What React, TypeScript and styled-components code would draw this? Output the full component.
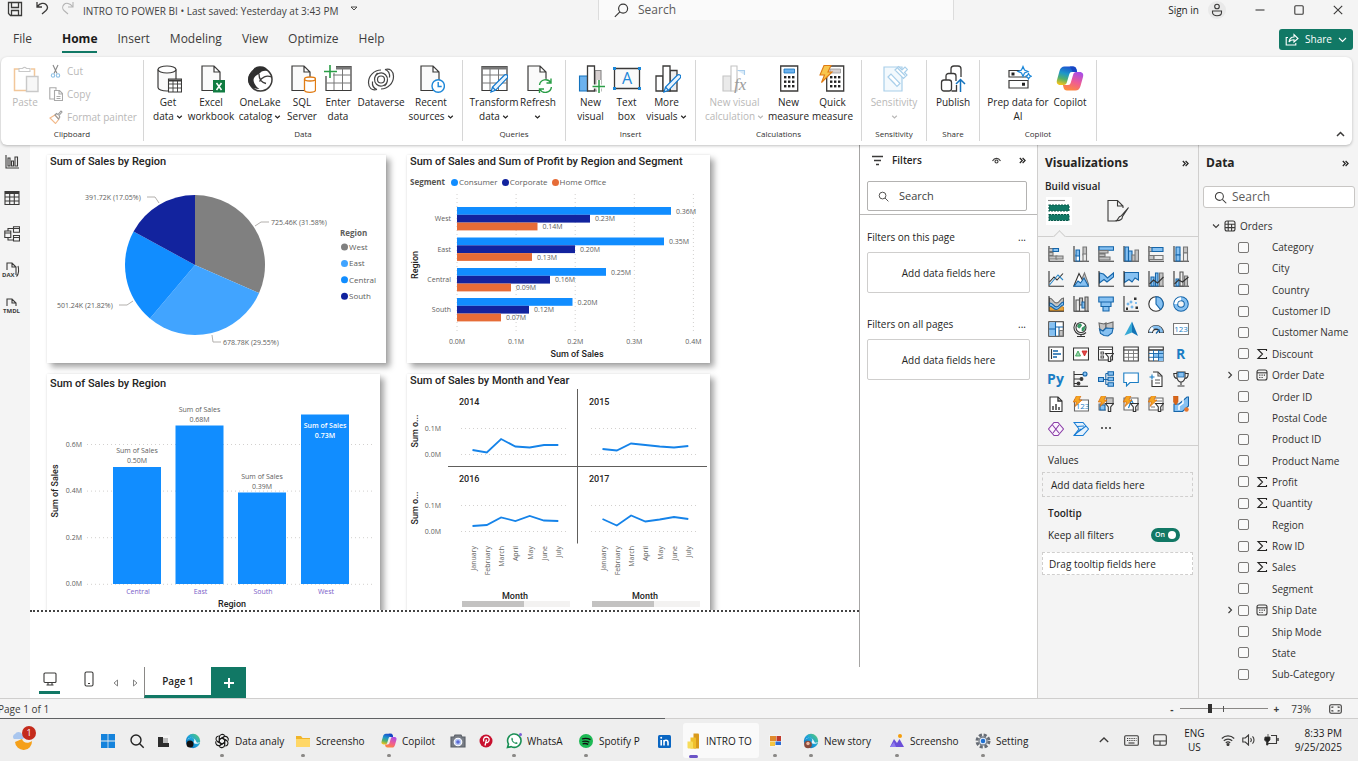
import React from "react";
import styled, { createGlobalStyle, css } from "styled-components";

const sans = `"Open Sans", "Noto Sans", sans-serif`;
const din = `Roboto, "Open Sans", sans-serif`;
const green = "#117865";

const GlobalStyle = createGlobalStyle`
  *, *::before, *::after { box-sizing: border-box; }
  body { margin: 0; background: #f4f4f4; font-family: ${sans}; font-size: 10px; line-height: 14px; color: #252423; }
  button, input { font: inherit; color: inherit; }
  h1, h2, h3, p, ul { margin: 0; padding: 0; font-size: inherit; font-weight: inherit; list-style: none; }
  svg { display: block; flex: none; }
`;

/* ---------- small shared pieces ---------- */

const PlainButton = styled.button`
  display: flex;
  align-items: center;
  justify-content: center;
  padding: 0;
  border: 0;
  background: none;
`;

const Shell = styled.div`
  display: flex;
  flex-direction: column;
  min-height: 100vh;
`;

type IconProps = { size?: number; w?: number; h?: number; box?: string; children: React.ReactNode };
const Icon = ({ size = 16, w, h, box, children }: IconProps) => (
  <svg
    width={w ?? size}
    height={h ?? size}
    viewBox={box ?? `0 0 ${w ?? size} ${h ?? size}`}
    fill="none"
    stroke="#3b3a39"
    strokeWidth="1.1"
    aria-hidden="true"
  >
    {children}
  </svg>
);

const ChevronDown = () => (
  <Icon size={7}><path d="M1.2 2.8 3.5 5l2.300-2.200" stroke="currentColor" strokeWidth="1.2" /></Icon>
);
const DoubleChevron = () => (
  <Icon size={7}><path d="M.8 1l2.500 2.500L.8 6M3.600 1l2.500 2.500L3.600 6" stroke="#252423" strokeWidth="1.2" /></Icon>
);
const Magnifier = ({ size = 14, flip = false }: { size?: number; flip?: boolean }) => (
  <Icon size={size} box="0 0 14 14">
    {flip ? (
      <g><circle cx="8.5" cy="5.2" r="4.2" /><path d="M5.5 8.300.8 13" /></g>
    ) : (
      <g><circle cx="5.8" cy="5.8" r="4.3" /><path d="m9 9 4.200 4.200" /></g>
    )}
  </Icon>
);

/* ---------- title bar ---------- */

const TitleBar = styled.header`
  display: grid;
  grid-template-columns: 598fr 356fr 404fr;
  height: 23px;
`;
const TitleLeft = styled.div`
  display: flex;
  align-items: flex-start;
  gap: 12px;
  padding: 1px 0 0 7px;
`;
const DocName = styled.h1`
  margin: 3px 0 0 -4px;
  color: #424242;
  white-space: nowrap;
`;
const TitleSearch = styled.label`
  display: flex;
  align-items: center;
  gap: 9px;
  height: 20px;
  padding-left: 15px;
  border: solid #dcdcdc;
  border-width: 0 1px;
  background: #fafafa;
`;
const SearchInput = styled.input<{ $size: number; $dark?: boolean }>`
  flex: 1;
  min-width: 0;
  padding: 0;
  border: 0;
  outline: 0;
  background: none;
  font-size: ${(p) => p.$size}px;
  line-height: 16px;
  &::placeholder { color: ${(p) => (p.$dark ? "#403f3e" : "#5c5b5a")}; opacity: 1; }
`;
const TitleRight = styled.div`
  display: flex;
  align-items: center;
  justify-content: flex-end;
  height: 20px;
  padding-right: 13px;
`;
const WindowButton = styled(PlainButton)`
  width: 14px;
  margin-left: 25px;
`;
const Avatar = styled.span`
  display: grid;
  place-items: center;
  width: 18px;
  height: 18px;
  margin: 0 2px 0 9px;
  border-radius: 9px;
  background: #e9e9e9;
`;

/* ---------- menu ---------- */

const MenuBar = styled.nav`
  display: flex;
  align-items: center;
  gap: 20px;
  height: 34px;
  padding: 0 5px 0 13px;
  font-size: 12px;
  line-height: 18px;
  color: #3d3c3b;
`;
const MenuItem = styled.button<{ $active?: boolean; $lead?: boolean }>`
  padding: 2px 0 3px;
  border: 0;
  border-bottom: 2px solid ${(p) => (p.$active ? green : "transparent")};
  background: none;
  font-weight: ${(p) => (p.$active ? 700 : 400)};
  color: ${(p) => (p.$active ? "#1b1a19" : "inherit")};
  margin-right: ${(p) => (p.$lead ? 10 : 0)}px;
`;
const ShareButton = styled(PlainButton)`
  gap: 6px;
  width: 74px;
  height: 21px;
  margin: 0 0 2px auto;
  border-radius: 3px;
  background: ${green};
  color: #fff;
  font-size: 10px;
`;

/* ---------- ribbon ---------- */

const Ribbon = styled.section`
  position: relative;
  z-index: 1;
  display: flex;
  height: 88px;
  margin: 0 6px 0 1px;
  padding: 3px 0 4px;
  border-radius: 6px;
  background: #fff;
  box-shadow: 0 1px 3px rgba(0, 0, 0, 0.25);
`;
const Group = styled.div<{ $width: number }>`
  display: flex;
  flex-direction: column;
  justify-content: space-between;
  align-items: center;
  width: ${(p) => p.$width}px;
  border-right: 1px solid #d6d6d6;
`;
const GroupButtons = styled.div<{ $start?: boolean }>`
  display: flex;
  align-self: stretch;
  justify-content: ${(p) => (p.$start ? "flex-start" : "center")};
`;
const GroupName = styled.div`
  font-size: 8px;
  line-height: 14px;
  color: #323130;
`;
const RibbonButton = styled.button<{ $width: number; $muted?: boolean }>`
  display: flex;
  flex-direction: column;
  align-items: center;
  gap: 2px;
  width: ${(p) => p.$width}px;
  padding: 5px 0 0;
  border: 0;
  background: none;
  color: ${(p) => (p.$muted ? "#b9b8b7" : "#252423")};
  white-space: nowrap;
`;
const Line = styled.span`
  display: flex;
  align-items: center;
  justify-content: center;
  gap: 2px;
  min-height: 14px;
`;
const ClipList = styled.div`
  display: flex;
  flex-direction: column;
  gap: 9px;
  padding-top: 4px;
`;
const ClipButton = styled(PlainButton)`
  justify-content: flex-start;
  gap: 4px;
  height: 14px;
  color: #b9b8b7;
`;
const Collapse = styled(PlainButton)`
  align-self: flex-end;
  width: 14px;
  height: 14px;
  margin: 0 5px 0 auto;
`;

const Doc = ({ x = 4 }: { x?: number }) => (
  <path d={`M${x} 1h12l6 6v18.500h-18zM${x + 12} 1v6h6`} fill="#fafafa" strokeWidth="1.2" />
);
const TableShape = () => (
  <g strokeWidth="1">
    <path d="M2 1.500h25v24H2z" fill="#fff" strokeWidth="1.2" />
    <path d="M2 3h25" strokeWidth="3" stroke="#777" />
    <path d="M2 10h25M2 18h25M10 4v21M18.500 4v21" stroke="#777" />
  </g>
);
const Pencil = () => (
  <path d="M11 27l1.500-5L24.500 10a2 2 0 0 1 2.800 2.800L15.500 25.300zM12.500 22l3 3.300" fill="#e9f4fd" stroke="#0f78cf" strokeWidth="1.2" />
);
const Calculator = ({ x, plain }: { x: number; plain?: boolean }) => (
  <g transform={`translate(${x} 0)`}>
    <path d="M.7 1h17v25H.7z" fill="#fff" strokeWidth="1.3" />
    <path d="M4 4h10.500v4H4z" fill={plain ? "#d6cfcf" : "#6cb2ee"} stroke={plain ? "#999" : "#1372bd"} strokeWidth=".8" />
    {[11, 15.5, 20].map((y) =>
      [4, 8, 12].map((cx) => <path key={`${cx}-${y}`} d={`M${cx} ${y}h2.400v2.400h-2.400z`} fill="#222" stroke="none" />),
    )}
  </g>
);
const CopilotMark = ({ id }: { id: string }) => (
  <g stroke="none">
    <defs>
      <linearGradient id={`${id}a`} x1=".6" y1="0" x2=".3" y2="1">
        <stop offset="0" stopColor="#1b4fd0" /><stop offset=".4" stopColor="#1e97c9" />
        <stop offset=".7" stopColor="#55b06a" /><stop offset="1" stopColor="#f0c21a" />
      </linearGradient>
      <linearGradient id={`${id}b`} x1=".7" y1="0" x2=".3" y2="1">
        <stop offset="0" stopColor="#a94ee6" /><stop offset=".5" stopColor="#ee5c95" /><stop offset="1" stopColor="#ff8a3a" />
      </linearGradient>
    </defs>
    <path d="M20 7h3.500c3.500 0 4.200 2.500 3.500 5l-2.500 9c-.8 3-2.500 4.500-5 4.500H11c-2 0-3-1.200-3.500-3l-.6-2.500H12c1.500 0 2.300-.8 2.800-2.500l2.400-8C17.700 8 18.500 7 20 7z" fill={`url(#${id}b)`} />
    <path d="M8 20H4.500C1 20 .3 17.500 1 15l2.500-9C4.300 3 6 1.500 8.500 1.500H17c2 0 3 1.200 3.500 3l.6 2.500H16c-1.500 0-2.300.8-2.800 2.500l-2.400 8C10.300 19 9.500 20 8 20z" fill={`url(#${id}a)`} />
    <path d="M13.500 1.500H17c2 0 3 1.200 3.500 3l.6 2.500H17c-1.500-1-1.800-5.500-3.500-5.500z" fill="#1646c4" />
  </g>
);

const ribbonArt: Record<string, React.ReactNode> = {
  paste: (
    <g stroke="#c9c9c9">
      <path d="M8 4H3.500v21.500H15M20 4h3.500v7" stroke="#f2c79a" strokeWidth="1.5" />
      <path d="M8 6.500V3.500h3.500a2.300 2.300 0 0 1 4 0H19v3z" fill="#fff" />
      <path d="M15.500 11.500H27v15H15.500z" fill="#f7f7f7" strokeWidth="1.4" />
    </g>
  ),
  getData: (
    <g>
      <path d="M4 4.500v18c0 2 4 3.500 9 3.500s9-1.500 9-3.500v-18" fill="#fafafa" strokeWidth="1.2" />
      <ellipse cx="13" cy="4.5" rx="9" ry="3.5" fill="#fff" strokeWidth="1.2" />
      <path d="M14.500 14h13v13h-13z" fill="#fff" />
      <path d="M14.500 15.500h13" strokeWidth="2" /><path d="M14.500 19h13M14.500 23h13M19 16v11M23.500 16v11" strokeWidth=".9" />
    </g>
  ),
  excel: (
    <g>
      <Doc x={5} />
      <path d="M16 15h12v12.500H16z" fill="#107c41" stroke="none" />
      <path d="m19.500 18 5 7M24.500 18l-5 7" stroke="#fff" strokeWidth="1.5" />
    </g>
  ),
  onelake: (
    <g>
      <circle cx="14.500" cy="14.500" r="11.500" fill="#fff" strokeWidth="1.5" />
      <path d="M12 1.500c5-1 9 1 10 4.500-4-1-7 0-9 3-3 1-5 3-5.500 6 .5 4 3 7 6 9C6 24 2 20 2 14.500 2 11 4 8 6.500 7 7 4 9 2 12 1.500z" fill="#2f2f2f" stroke="none" />
      <path d="M13 9c0 5 3 8.500 7 9.500M25.500 12c-5-2-10 0-12 4.500" strokeWidth="1.3" />
    </g>
  ),
  sql: (
    <g>
      <Doc />
      <g stroke="#e07b13" strokeWidth="1.3">
        <path d="M16.500 14v11c0 1.300 2.500 2.300 5.500 2.300s5.500-1 5.500-2.300V14" fill="#fff" />
        <ellipse cx="22" cy="14" rx="5.5" ry="2" fill="#fff" />
      </g>
    </g>
  ),
  enter: (
    <g>
      <TableShape />
      <path d="M0 0h12v8H9v3H0z" fill="#fff" stroke="none" />
      <path d="M6 0v13M0 6.500h13" stroke="#2a9d46" strokeWidth="1.6" />
    </g>
  ),
  dataverse: (
    <g strokeWidth="1.2" stroke="#444">
      <circle cx="14" cy="14.500" r="3.500" />
      <path d="M7.500 14.500a6.500 6.500 0 0 1 11-4.700c3 3 2.500 8-1 11.200M20.500 14.500a6.500 6.500 0 0 1-11 4.700c-3-3-2.500-8 1-11.200" />
      <path d="M18 4.500c5-1.500 8.500 1.500 8.500 7C26.500 18 21 24 14 24M10 24.500c-5 1.500-8.500-1.500-8.500-7C1.500 11 7 5 14 5" />
      <path d="M18 4.500c3 1 5 4 4.500 8M10 24.500c-3-1-5-4-4.500-8" />
    </g>
  ),
  recent: (
    <g>
      <Doc />
      <circle cx="21.200" cy="21" r="6.200" fill="#fff" stroke="#1c87d8" strokeWidth="1.4" />
      <path d="M21.200 17v4.500h3.500" stroke="#1c87d8" strokeWidth="1.4" />
    </g>
  ),
  transform: <g><TableShape /><Pencil /></g>,
  refresh: (
    <g>
      <Doc />
      <circle cx="21.500" cy="21" r="7.200" fill="#fff" stroke="none" />
      <path d="M15.500 20a6.200 6.200 0 0 1 11.300-2.500M27.400 22A6.200 6.200 0 0 1 16 24.500M27 13.500v4.500h-4.500M15.500 28V24H20" stroke="#2a9d46" strokeWidth="1.4" />
    </g>
  ),
  newVisual: (
    <g>
      <path d="M2.500 11h8v15h-8z" fill="#6cb2ee" stroke="#1372bd" />
      <path d="M18 5.500h6V26h-6z" fill="#d6cfcf" stroke="#888" />
      <path d="M10.500 1h7v25h-7z" fill="#fff" strokeWidth="1.3" />
      <path d="M22 15v13M15.500 21.500h13" stroke="#fff" strokeWidth="4" />
      <path d="M22 15v13M15.500 21.500h12.500" stroke="#2a9d46" strokeWidth="1.5" />
    </g>
  ),
  textBox: (
    <g>
      <path d="M1.500 3.500h25v20h-25z" fill="#fafafa" strokeWidth="1.3" />
      {[[1.5, 3.5], [26.5, 3.5], [1.5, 23.5], [26.5, 23.5]].map(([x, y]) => (
        <path key={`${x}${y}`} d={`M${x - 1.5} ${y - 1.5}h3v3h-3z`} fill="#1c87d8" stroke="none" />
      ))}
      <text x="14" y="19" fontSize="16" textAnchor="middle" fill="#1c87d8" stroke="none">A</text>
    </g>
  ),
  moreVisuals: (
    <g strokeWidth="1.3">
      <path d="M3 11h7v15H3z" fill="#fff" /><path d="M17 5.500h7V26h-7z" fill="#eee" /><path d="M10 1h7v25h-7z" fill="#fff" />
      <Pencil />
    </g>
  ),
  visualCalc: (
    <g stroke="#c4c4c4">
      <path d="M2 11h8v15H2z" fill="#eaeaea" /><path d="M10 1h6v25h-6z" fill="#fff" />
      <path d="M16.500 5.500h7V10" stroke="#a9cdec" fill="#d9eaf8" />
      <text x="13" y="25" fontSize="17" fontStyle="italic" fontFamily="Liberation Serif, serif" fill="#9b9b9b" stroke="none">fx</text>
    </g>
  ),
  newMeasure: <Calculator x={5} />,
  quickMeasure: (
    <g>
      <Calculator x={7} plain />
      <path d="M5 .5h7L9 7h4L2.500 17.500 5.500 10H1z" fill="#f8c64e" stroke="#e07b13" />
    </g>
  ),
  sensitivity: (
    <g stroke="#a9cfea" strokeWidth="1.2">
      <path d="M4 2h18v24H4z" fill="#f3f9fd" />
      <path d="m8 12 3-3 9 9.500-3 3zM10.500 14.500l4.500 4.500" fill="#fff" />
      <path d="m15 5 3.500-3.500L22 5l3-3 2.500 2.500-3 3 2.500 2.500-3.500 3.500z" fill="#fff" />
      <path d="m17.500 3 7.500 7.500" />
    </g>
  ),
  publish: (
    <g strokeWidth="1.3">
      <path d="M12 8.500V4a3 3 0 0 1 3-3h4a3 3 0 0 1 3 3v8M7 15v-4a2.500 2.500 0 0 1 2.500-2.500h5A2.500 2.500 0 0 1 17 11v5" />
      <rect x="2.500" y="15" width="10" height="11" rx="2.5" /><path d="M12.500 26h5v-6" />
      <path d="M21.500 27V14.500M17 19l4.500-4.500L26 19" stroke="#1372bd" strokeWidth="1.5" />
    </g>
  ),
  prep: (
    <g strokeWidth="1.2">
      <path d="M17 5.500H5V12h18v-1M5 15.500h19v7.500H5z" />
      <path d="M7.500 7.500h3v3h-3zM18 17.800h3v3h-3z" fill="#222" stroke="none" />
      <path d="M19 1.500 20.500 5 24 6.500 20.500 8 19 11.500 17.500 8 14 6.500 17.500 5z" fill="#fff" stroke="#1c87d8" />
      <path d="m24.500 8.500 1 1.700 1.800 1-1.800 1-1 1.800-1-1.800-1.800-1 1.800-1z" fill="#fff" stroke="#1c87d8" />
    </g>
  ),
  copilot: <CopilotMark id="ribbon" />,
};

type Cmd = { art: string; l1: string; l2?: string; w: number; menu?: boolean; muted?: boolean };
const ribbonGroups: { name: string; width: number; cmds: Cmd[] }[] = [
  {
    name: "Data", width: 319, cmds: [
      { art: "getData", l1: "Get", l2: "data", w: 40, menu: true },
      { art: "excel", l1: "Excel", l2: "workbook", w: 46 },
      { art: "onelake", l1: "OneLake", l2: "catalog", w: 52, menu: true },
      { art: "sql", l1: "SQL", l2: "Server", w: 32 },
      { art: "enter", l1: "Enter", l2: "data", w: 40 },
      { art: "dataverse", l1: "Dataverse", w: 46 },
      { art: "recent", l1: "Recent", l2: "sources", w: 54, menu: true },
    ],
  },
  { name: "Queries", width: 103, cmds: [
    { art: "transform", l1: "Transform", l2: "data", w: 48, menu: true },
    { art: "refresh", l1: "Refresh", l2: "", w: 40, menu: true },
  ] },
  { name: "Insert", width: 130, cmds: [
    { art: "newVisual", l1: "New", l2: "visual", w: 36 },
    { art: "textBox", l1: "Text", l2: "box", w: 36 },
    { art: "moreVisuals", l1: "More", l2: "visuals", w: 44, menu: true },
  ] },
  { name: "Calculations", width: 166, cmds: [
    { art: "visualCalc", l1: "New visual", l2: "calculation", w: 62, menu: true, muted: true },
    { art: "newMeasure", l1: "New", l2: "measure", w: 46 },
    { art: "quickMeasure", l1: "Quick", l2: "measure", w: 42 },
  ] },
  { name: "Sensitivity", width: 65, cmds: [{ art: "sensitivity", l1: "Sensitivity", l2: "", w: 52, menu: true, muted: true }] },
  { name: "Share", width: 53, cmds: [{ art: "publish", l1: "Publish", w: 44 }] },
  { name: "Copilot", width: 117, cmds: [
    { art: "prep", l1: "Prep data for", l2: "AI", w: 64 },
    { art: "copilot", l1: "Copilot", w: 40 },
  ] },
];

/* ---------- workspace ---------- */

const Workspace = styled.main`
  flex: 1;
  display: flex;
`;
const Rail = styled.nav`
  display: flex;
  flex-direction: column;
  align-items: center;
  gap: 20px;
  width: 30px;
  padding: 9px 6px 0 0;
  background: #f4f4f4;
`;
const RailButton = styled(PlainButton)`
  width: 20px;
  height: 16px;
`;
const Center = styled.div`
  flex: 1;
  display: flex;
  flex-direction: column;
  min-width: 0;
  background: #fff;
`;
const CenterTop = styled.div`
  flex: 1;
  display: flex;
`;
const Canvas = styled.section`
  flex: 1;
  min-width: 0;
`;
const ReportPage = styled.div`
  display: grid;
  grid-template-columns: 339px 303px;
  grid-template-rows: 208px 237px;
  gap: 11px 21px;
  height: 467px;
  padding: 10px 0 0 17px;
  border-bottom: 2px dotted #444;
  overflow: hidden;
`;
const Visual = styled.article<{ $narrow?: boolean }>`
  margin-right: ${(p) => (p.$narrow ? 6 : 0)}px;
  background: #fff;
  box-shadow: 4px 4px 6px rgba(0, 0, 0, 0.36), 0 0 2px rgba(0, 0, 0, 0.1);
`;
const VisualTitle = styled.h2<{ $low?: boolean }>`
  padding: ${(p) => (p.$low ? 3 : 0)}px 0 0 3px;
  height: ${(p) => (p.$low ? 17 : 14)}px;
  font: 500 11px/14px ${din};
  color: #252423;
  white-space: nowrap;
`;
const SegmentLegend = styled.ul`
  display: flex;
  align-items: center;
  gap: 4px;
  height: 14px;
  margin: 6px 0 0 3px;
  font-size: 8px;
  line-height: 14px;
  color: #605e5c;
`;
const LegendTitle = styled.li`
  margin-right: 2px;
  font-weight: 700;
  color: #55534f;
`;
const LegendItem = styled.li<{ $color: string }>`
  display: flex;
  align-items: center;
  gap: 1px;
  &::before { content: ""; width: 7px; height: 7px; border-radius: 4px; background: ${(p) => p.$color}; }
`;
const Chart = styled.svg`
  width: 100%;
  height: auto;
  font-family: ${sans};
  font-size: 7px;
  fill: #605e5c;
  .din { font-family: ${din}; font-size: 9px; font-weight: 500; fill: #252423; }
  .legend { font-size: 8px; }
`;

const slices = [
  { name: "West", share: 31.58, color: "#808080" },
  { name: "East", share: 29.55, color: "#41a4ff" },
  { name: "Central", share: 21.82, color: "#118dff" },
  { name: "South", share: 17.05, color: "#12239e" },
];
const PieChart = () => {
  let sum = 0;
  const at = (v: number) => {
    const a = (v / 100) * Math.PI * 2;
    return `${195 + 70 * Math.sin(a)} ${265 - 70 * Math.cos(a)}`;
  };
  return (
    <Chart viewBox="47 169 339 194" role="img" aria-label="Sum of Sales by Region">
      {slices.map((s) => {
        const from = at(sum);
        sum += s.share;
        return <path key={s.name} d={`M195 265L${from}A70 70 0 0 1 ${at(sum)}z`} fill={s.color} />;
      })}
      <g fill="none" stroke="#b3b0ad" strokeWidth="1">
        <path d="M147 197h8l4 6M255 226l6-4h8M212 335l1 7h8M119 305h8l6-4" />
      </g>
      <text x="85" y="200">391.72K (17.05%)</text>
      <text x="271" y="225">725.46K (31.58%)</text>
      <text x="57" y="308">501.24K (21.82%)</text>
      <text x="223" y="345">678.78K (29.55%)</text>
      <g className="legend">
        <text x="340" y="236" fontWeight="700">Region</text>
        {slices.map((s, i) => (
          <g key={s.name}>
            <circle cx="344.500" cy={247 + i * 16.4} r="3.5" fill={s.color} />
            <text x="349" y={250 + i * 16.4}>{s.name}</text>
          </g>
        ))}
      </g>
    </Chart>
  );
};

const clustered = [
  { name: "West", y: 207, bars: [[671, "0.36M"], [590, "0.23M"], [537.5, "0.14M"]] },
  { name: "East", y: 237.5, bars: [[664, "0.35M"], [575, "0.20M"], [532, "0.13M"]] },
  { name: "Central", y: 268, bars: [[606, "0.25M"], [550, "0.16M"], [511, "0.09M"]] },
  { name: "South", y: 298, bars: [[572.5, "0.20M"], [529, "0.12M"], [501, "0.07M"]] },
] as { name: string; y: number; bars: [number, string][] }[];
const segColors = ["#118dff", "#12239e", "#e66c37"];
const ClusteredChart = () => (
  <Chart viewBox="407 189 303 174" role="img" aria-label="Sum of Sales and Sum of Profit by Region and Segment">
    {["0.0M", "0.1M", "0.2M", "0.3M", "0.4M"].map((t, i) => (
      <g key={t}>
        <path d={`M${457 + i * 59.1} 194v140`} stroke="#d2d0ce" strokeDasharray="1 3" />
        <text x={457 + i * 59.1} y="344" textAnchor="middle">{t}</text>
      </g>
    ))}
    {clustered.map((r) => (
      <g key={r.name}>
        <text x="451" y={r.y + 14} textAnchor="end">{r.name}</text>
        {r.bars.map(([x, label], i) => (
          <g key={label}>
            <rect x="457" y={r.y + i * 7.8} width={x - 457} height={7.8} fill={segColors[i]} />
            <text x={x + 5} y={r.y + i * 7.8 + 6.5}>{label}</text>
          </g>
        ))}
      </g>
    ))}
    <text className="din" x="577" y="357" textAnchor="middle">Sum of Sales</text>
    <text className="din" transform="translate(418 265) rotate(-90)" textAnchor="middle">Region</text>
  </Chart>
);

const columns = [
  { name: "Central", x: 113, top: 467, value: "0.50M" },
  { name: "East", x: 175.5, top: 425.5, value: "0.68M" },
  { name: "South", x: 238, top: 492.5, value: "0.39M" },
  { name: "West", x: 301, top: 414.5, value: "0.73M" },
];
const ColumnChart = () => (
  <Chart viewBox="47 391 333 220" role="img" aria-label="Sum of Sales by Region">
    {["0.6M", "0.4M", "0.2M", "0.0M"].map((t, i) => (
      <g key={t}>
        <path d={`M87 ${444.5 + i * 46.6}h287`} stroke="#d2d0ce" strokeDasharray="1 3" />
        <text x="82" y={446.5 + i * 46.6} textAnchor="end">{t}</text>
      </g>
    ))}
    {columns.map((c) => {
      const inside = c.name === "West";
      const y = inside ? c.top + 13.5 : c.top - 14;
      return (
        <g key={c.name} textAnchor="middle">
          <rect x={c.x} y={c.top} width="48" height={584 - c.top} fill="#118dff" />
          <g fill={inside ? "#fff" : "#605e5c"} fontWeight={inside ? 600 : 400}>
            <text x={c.x + 24} y={y}>Sum of Sales</text>
            <text x={c.x + 24} y={y + 10}>{c.value}</text>
          </g>
          <text x={c.x + 25} y="594" fill="#7b61c9">{c.name}</text>
        </g>
      );
    })}
    <text className="din" x="232" y="607" textAnchor="middle">Region</text>
    <text className="din" transform="translate(58 491) rotate(-90)" textAnchor="middle">Sum of Sales</text>
  </Chart>
);

const months = ["January", "February", "March", "April", "May", "June", "July"];
const multiples = [
  { year: "2014", x: 459, y: 390, ys: [450, 452.5, 439, 446.5, 447.5, 445, 445] },
  { year: "2015", x: 589, y: 390, ys: [449, 450.5, 443.5, 445, 446.5, 447.5, 446] },
  { year: "2016", x: 459, y: 467, ys: [526, 525, 517.5, 521, 516, 520.5, 521] },
  { year: "2017", x: 589, y: 467, ys: [519, 525.5, 515.5, 521.5, 519.5, 517, 519] },
];
const SmallMultiples = () => (
  <Chart viewBox="407 388 303 223" role="img" aria-label="Sum of Sales by Month and Year">
    <path d="M448 466.500h259M577.500 389v154.500" stroke="#605e5c" />
    {multiples.map((m) => (
      <g key={m.year}>
        <text className="din" x={m.x} y={m.y + 15}>{m.year}</text>
        <path d={`M${m.x + 2} ${m.y + 38.5}h108M${m.x + 2} ${m.y + 64.5}h108`} stroke="#d2d0ce" strokeDasharray="1 3" />
        <path d={`M${m.ys.map((y, i) => `${m.x + 13.5 + i * 14.3} ${y}`).join("L")}`} fill="none" stroke="#1583e9" strokeWidth="1.8" />
      </g>
    ))}
    {[390, 467].map((y) => (
      <g key={y}>
        <text x="441" y={y + 41} textAnchor="end">0.1M</text>
        <text x="441" y={y + 67} textAnchor="end">0.0M</text>
        <text className="din" transform={`translate(418 ${y + 41}) rotate(-90)`} textAnchor="middle">Sum o...</text>
      </g>
    ))}
    {[459, 589].map((x) => (
      <g key={x}>
        {months.map((m, i) => (
          <text key={m} transform={`translate(${x + 16.5 + i * 14.3} 546) rotate(-90)`} textAnchor="end">{m}</text>
        ))}
        <text className="din" x={x + 56} y="599" textAnchor="middle">Month</text>
        <rect x={x + 3} y="601" width="108" height="6" fill="#f3f2f1" />
        <rect x={x + 3} y="601" width="62" height="6" fill="#c3c2c1" />
      </g>
    ))}
  </Chart>
);

/* ---------- page tabs ---------- */

const PageTabs = styled.div`
  display: flex;
  align-items: stretch;
  height: 31px;
  padding-left: 9px;
`;
const ViewButton = styled(PlainButton)<{ $active?: boolean }>`
  width: 21px;
  height: 27px;
  border-bottom: 3px solid ${(p) => (p.$active ? green : "transparent")};
  & + & { margin: 0 7px 0 18px; }
`;
const StepButton = styled(PlainButton)`
  width: 19px;
`;
const PageTab = styled.button`
  width: 67px;
  padding: 0;
  border: 0;
  border-left: 1px solid #8a8886;
  border-bottom: 3px solid ${green};
  background: #fff;
  font-weight: 600;
`;
const AddPage = styled(PlainButton)`
  width: 35px;
  background: ${green};
`;

/* ---------- filters pane ---------- */

const FiltersPane = styled.aside`
  width: 178px;
  border-left: 1px solid #a6a5a4;
`;
const FiltersHead = styled.div`
  display: flex;
  align-items: center;
  height: 30px;
  padding: 0 11px 0 12px;
  font-weight: 600;
  h2 { flex: 1; margin-left: 9px; }
`;
const EyeButton = styled(PlainButton)`
  margin-right: 18px;
`;
const FilterSearch = styled.div`
  padding: 6px 10px 3px 7px;
  border-bottom: 1px solid #b9b8b7;
  label {
    display: flex;
    align-items: center;
    gap: 10px;
    height: 30px;
    padding-left: 10px;
    border: 1px solid #b3b2b1;
    border-radius: 2px;
  }
`;
const FilterSection = styled.section`
  padding: 15px 7px 9px;
`;
const FilterTitle = styled.div`
  display: flex;
  justify-content: space-between;
  height: 14px;
  padding-right: 4px;
`;
const FilterDrop = styled.div`
  display: grid;
  place-items: center;
  height: 41px;
  margin-top: 8px;
  border: 1px solid #cfcecd;
  border-radius: 2px;
`;

/* ---------- visualizations pane ---------- */

const VizPane = styled.aside`
  width: 162px;
  border: solid #d0cfce;
  border-width: 0 1px;
  background: #f4f4f4;
`;
const PaneHead = styled.div`
  display: flex;
  align-items: center;
  justify-content: space-between;
  height: 36px;
  padding: 0 9px 0 7px;
  h2 { font-size: 12px; font-weight: 700; line-height: 18px; }
`;
const BuildLabel = styled.h3`
  padding: 0 7px;
  line-height: 14px;
  font-weight: 600;
  margin-top: -2px;
`;
const ModeRow = styled.div`
  display: flex;
  gap: 33px;
  height: 44px;
  padding: 4px 0 0 8px;
  border-bottom: 1px solid #d0cfce;
`;
const ModeButton = styled(PlainButton)<{ $active?: boolean }>`
  width: 26px;
  height: 28px;
  background: ${(p) => (p.$active ? "#fff" : "none")};
  position: relative;
  ${(p) =>
    p.$active &&
    css`
      &::after {
        content: "";
        position: absolute;
        left: 9px;
        top: 35px;
        width: 9px;
        height: 9px;
        border: solid #d0cfce;
        border-width: 1px 0 0 1px;
        background: #f4f4f4;
        transform: rotate(45deg);
      }
    `}
`;
const VizGrid = styled.div`
  position: relative;
  display: grid;
  grid-template-columns: repeat(6, 25px);
  grid-auto-rows: 25px;
  padding: 4px 0 4px 5px;
  background: #f4f4f4;
  border-bottom: 1px solid #d0cfce;
`;
const VizButton = styled(PlainButton)<{ $word?: boolean }>`
  font-size: 14px;
  font-weight: ${(p) => (p.$word ? 700 : 400)};
  color: #1a7dc4;
`;
const FieldWell = styled.div`
  padding: 7px 5px 0 4px;
`;
const WellTitle = styled.h3<{ $strong?: boolean }>`
  padding: 0 6px;
  font-weight: ${(p) => (p.$strong ? 600 : 400)};
`;
const WellDrop = styled.div<{ $white?: boolean }>`
  display: flex;
  align-items: center;
  height: ${(p) => (p.$white ? 23 : 25)}px;
  margin: ${(p) => (p.$white ? 10 : 5)}px 0 2px;
  padding-left: ${(p) => (p.$white ? 6 : 8)}px;
  border: 1px dashed #d0cfce;
  background: ${(p) => (p.$white ? "#fff" : "none")};
`;
const ToggleRow = styled.label`
  display: flex;
  align-items: center;
  justify-content: space-between;
  padding: 8px 13px 0 6px;
`;
const Toggle = styled.span`
  position: relative;
  width: 29px;
  height: 14px;
  border-radius: 7px;
  background: ${green};
  color: #fff;
  font-size: 7px;
  font-weight: 600;
  line-height: 14px;
  padding-left: 4px;
  input { appearance: none; position: absolute; inset: 0; margin: 0; }
  &::after { content: ""; position: absolute; right: 4px; top: 3px; width: 8px; height: 8px; border-radius: 4px; background: #fff; }
`;

const B = "#1565a9", L = "#86c1f2", G = "#c4c4c4", K = "#333";
const Axis = <path d="M1 0v15.300h15" stroke={K} />;
const Bolt = <path d="M3.500-.3h4.500L6 4h3L2 10.500 3.500 6H.3z" fill="#f5a623" stroke="#d8690c" strokeWidth=".7" />;
const Funnel = <path d="M7.500 7.500h8L12.700 11v4.500h-2.400V11z" fill="#f4f4f4" stroke={K} />;
const vizArt: [string, React.ReactNode][] = [
  ["Stacked bar chart", <g>{Axis}<path d="M1 2.500h5v3H1zM1 10h8v3H1z" fill={G} stroke="#777" /><path d="M5 2.500h5.500v3H5z" fill={L} stroke={B} /><path d="M8 10h7v3H8zM1 6.500h4v3H1z" fill={G} stroke="#777" /></g>],
  ["Stacked column chart", <g>{Axis}<path d="M3 9h3.500v6H3z" fill="#fff" stroke={B} /><path d="M3 4h3.500v6H3z" fill={L} stroke={B} /><path d="M10 1h3.500v8H10z" fill={G} stroke="#777" /><path d="M10 8h3.500v7H10z" fill="#eee" stroke="#777" /></g>],
  ["Clustered bar chart", <g>{Axis}<path d="M1 .8h14.500v3.500H1z" fill={L} stroke={B} /><path d="M1 4.500h9V7H1zM1 8h6v2.500H1zM1 11h11v3H1z" fill={G} stroke="#777" /></g>],
  ["Clustered column chart", <g>{Axis}<path d="M2 1h3.500v14H2z" fill={L} stroke={B} /><path d="M5.500 5H9v10H5.500z" fill={L} stroke={B} /><path d="M9 9h3v6H9zM12 4h3.500v11H12z" fill={G} stroke="#777" /></g>],
  ["100% stacked bar chart", <g>{Axis}<path d="M1 1.500h6v4H1zM1 9.500h5v4H1z" fill={G} stroke="#777" /><path d="M4 1.500h11v4H4z" fill={L} stroke={B} /><path d="M6 9.500h9v4H6z" fill="#eee" stroke="#777" /></g>],
  ["100% stacked column chart", <g>{Axis}<path d="M3 1h4v8H3z" fill={L} stroke={B} /><path d="M3 9h4v6H3z" fill={L} stroke={B} /><path d="M10.500 1h4v6h-4z" fill={G} stroke="#777" /><path d="M10.500 7h4v8h-4z" fill="#eee" stroke="#777" /></g>],
  ["Line chart", <g>{Axis}<path d="M1.500 11 6 6l3 3 6-6.500" stroke={K} /><path d="m1.500 14 5-6L10 4l5 5" stroke="#2b88c8" /></g>],
  ["Area chart", <g><path d="M6 14.500 11.500 2 16 14.500z" fill={G} stroke="#777" /><path d="M.8 15 6 2.500 11 12v3z" fill="#fff" stroke={K} /><path d="M1 15.300 5 10l2.500 2L11 7l4.500 8.300z" fill={L} stroke={B} /></g>],
  ["Stacked area chart", <g><path d="M1.500 2v10L6 8.500 9 11l6.500-5V2L9.500 7 5.500 3z" fill={L} stroke={B} />{Axis}</g>],
  ["100% stacked area chart", <g><path d="M1.500 1.500h14V9L12 7l-3 4-3-2.500-4.500 3z" fill={L} stroke={B} />{Axis}</g>],
  ["Line and stacked column chart", <g>{Axis}<path d="M3 6h3v9H3zM7.500 2H10v13H7.500z" fill={L} stroke={B} /><path d="M11.500 2h3.500v13h-3.500z" fill={G} stroke="#777" /><path d="m1.500 13 4-4 4 3 6-6" stroke={K} /></g>],
  ["Line and clustered column chart", <g>{Axis}<path d="M3 8h3v7H3z" fill={L} stroke={B} /><path d="M7 1h3v14H7z" fill="#eee" stroke="#555" /><path d="M11.500 5h3v10h-3z" fill={G} stroke="#777" /><path d="m1.500 13 4-4 4 2 6-5" stroke={K} /></g>],
  ["Ribbon chart", <g><path d="M1.500 11c3 0 4-4 7-4s3 4 7 4v4h-14z" fill="#e8a33d" stroke="#b9720f" strokeWidth=".8" /><path d="M1.500 2C5 2 5 7 8.500 7S12 2 15.500 2v4c-3 0-3 5-7 5s-4-4-7-4z" fill={G} stroke="#666" /><path d="M1.500 7c4 0 4 4 7 4s4-5 7-5v3c-3 0-4 4.500-7 4.500S4.500 10 1.500 10z" fill={L} stroke={B} />{Axis}</g>],
  ["Waterfall chart", <g>{Axis}<path d="M3 4h3.500v11H3z" fill="#eee" stroke="#555" /><path d="M6.500 2h3v7h-3z" fill={G} stroke="#555" /><path d="M9 6h3v6H9z" fill={L} stroke={B} /><path d="M12 1h3v14h-3z" fill={G} stroke="#555" /></g>],
  ["Funnel", <g fill={L} stroke={B}><path d="M.8 1h14.500v5H.8zM3 6h10v4.500H3zM5 10.500h6v4.500H5z" /></g>],
  ["Scatter chart", <g>{Axis}<path d="M4 7h2v2H4zM7 5h2v2H7zM8 10h2v2H8z" fill={L} stroke="#5fa8e0" strokeWidth=".5" /><path d="M11 1.500h2.500V4H11zM3 11.500h2V14H3zM12.500 10.500h2.500V13h-2.500z" fill={K} stroke="none" /><path d="M12 6h2v2h-2z" fill={L} stroke="none" /></g>],
  ["Pie chart", <g><circle cx="8" cy="8" r="7.200" fill="#fff" stroke={K} /><path d="M8 .8a7.200 7.200 0 0 1 4.500 12.800L8 8z" fill={L} stroke={B} /></g>],
  ["Donut chart", <g><circle cx="8" cy="8" r="5.300" stroke={B} strokeWidth="5" /><circle cx="8" cy="8" r="5.300" stroke={L} strokeWidth="3" /><path d="M2.700 8A5.300 5.300 0 0 1 8 2.700" stroke="#fff" strokeWidth="3" /></g>],
  ["Treemap", <g><path d="M.8.8h14.500v14.500H.8z" fill="#fff" stroke={K} /><path d="M1.300 1.300H7.500v13.500H1.300z" fill={L} stroke="none" /><path d="M7.500 1v14M1 8h6.500M7.500 6H15M11 6v9" stroke={B} /><path d="M11.500 9.500H15V15h-3.500z" fill={G} stroke="#777" /></g>],
  ["Map", <g><circle cx="8" cy="6.500" r="5" fill="#fff" stroke={K} /><path d="M5 4c2-2 3-1 3.500 0S7 6 6.500 7 5 6 4.500 5.500zM9 7l3-2c0 3-1 5-3 5z" fill="#38a169" stroke="#1d7a47" strokeWidth=".6" /><path d="M3 1.500a7 7 0 0 0 10 10M8 13v2.500M4 15.500h8" stroke={K} /></g>],
  ["Filled map", <g><path d="M1 2l5 1 2-1v5l-3 3-3-1z" fill={G} stroke="#666" /><path d="m8 3 7-2v6l-3 1-4-1z" fill={G} stroke="#666" /><path d="m1.500 8 3.500 2 3-3 7 .5-1 4.500-4 3-4-.5-3.500-2z" fill={L} stroke={B} /></g>],
  ["Azure map", <g stroke="none"><path d="M9 .5 15 15l-6-3.500z" fill="#1273b5" /><path d="M9 .5 1.500 14.500 9 11.500z" fill="#37a9d6" /></g>],
  ["Gauge", <g><path d="M2.500 12a5.500 5.500 0 0 1 11 0" stroke={K} strokeWidth="5" /><path d="M2.500 11.500a5.500 5.500 0 0 1 11 0" stroke={L} strokeWidth="3" /><path d="M2.700 10.500A5.500 5.500 0 0 1 5 7" stroke="#fff" strokeWidth="3" /><path d="m8 12.500 3.500-4" stroke={B} strokeWidth="1.4" /></g>],
  ["Card", <g><path d="M.5 2.500h15v11H.5z" fill="#fff" stroke="#777" /><text x="8" y="11" fontSize="8" textAnchor="middle" fill="#1a7dc4" stroke="none">123</text></g>],
  ["Multi-row card", <g><path d="M.8 1h14.500v14H.8z" fill="#fff" stroke={K} /><path d="M3.500 3v10" stroke={K} /><path d="M5 5h5M5 8h8M5 11h4" stroke={B} strokeWidth="1.6" /></g>],
  ["KPI", <g><path d="M.5 2h15v12H.5z" fill="#fff" stroke={K} /><path d="m5 5 2.500 5h-5z" fill="#9bd3ae" stroke="#2a9d46" strokeWidth=".8" /><path d="M9 5h5l-2.500 5z" fill="#e04b4b" stroke="#c22" strokeWidth=".8" /></g>],
  ["Slicer", <g><path d="M.5 1h14v13H.5z" fill="#fff" stroke={K} /><path d="M.5 3.500h14M3 6h2.500v2H3zM3 10h2.500v2H3z" stroke="#555" />{Funnel}</g>],
  ["Table", <g><path d="M.8 1h14.500v14H.8z" fill="#fff" stroke={K} /><path d="M.8 4h14.500" stroke={K} /><path d="M.8 7.500h14.500M.8 11.300h14.500M5.500 4v11M10.500 4v11" stroke="#777" strokeWidth=".9" /></g>],
  ["Matrix", <g><path d="M.8 1h14.500v14H.8z" fill="#fff" stroke={K} /><path d="M5.500 7.500h10v4h-10zM10.500 4h5v11h-5z" fill={L} stroke="none" /><path d="M.8 4h14.500" stroke={K} strokeWidth="1.5" /><path d="M.8 7.500h14.500M.8 11.300h14.500M5.500 4v11M10.500 4v11" stroke={B} strokeWidth=".9" /></g>],
  ["R", "R"],
  ["Py", "Py"],
  ["Key influencers", <g><path d="M1 0v16M1 3.500h9M1 8h6M1 12.500h3" stroke={K} /><circle cx="12" cy="3" r="2" fill={L} stroke={B} /><circle cx="8.500" cy="8" r="1.400" fill={K} /><circle cx="5.500" cy="12.500" r="1.400" fill={K} /><path d="M1 15.300h14" stroke={K} /></g>],
  ["Decomposition tree", <g fill={L} stroke={B}><path d="M.5 6.500h5v4h-5zM10 .8h5.500v3.500H10zM10 6.300h5.500v3.500H10zM10 11.800h5.500v3.500H10z" /><path d="M5.500 8.500H10M7.800 2.500v11M7.800 2.500H10M7.800 13.500H10" fill="none" /></g>],
  ["Q&A", <path d="M.8 2h14.500v9.500H7L3.500 15v-3.500H.8z" fill="#fff" stroke="#1a7dc4" />],
  ["Smart narrative", <g><path d="M5 1h5l4 4v10.500H4V9" fill="#fff" stroke={K} /><path d="M10 1v4h4M7 9h5M7 12h5" stroke="#555" /><path d="M4 3.500v5M1.500 6h5" stroke="#1a7dc4" /></g>],
  ["Goals", <g><path d="M4 1h8v5c0 3-2 5-4 5S4 9 4 6zM4 2.500H.8c0 3 1 5 3.500 5M12 2.500h3.200c0 3-1 5-3.500 5M8 11v3M4.500 15h7" stroke={K} /><path d="M5 1.500h6V6H5z" fill={L} stroke={B} strokeWidth=".8" /></g>],
  ["Paginated report", <g><path d="M2 1h8l4 4v10.500H2z" fill="#fff" stroke={K} /><path d="M10 1v4h4M5 10v4M8 8v6M11 11v3" stroke={K} strokeWidth="1.4" /></g>],
  ["Card (new)", <g><path d="M1.500 4h14v11h-14z" fill="#fff" stroke="#666" /><text x="9.500" y="13" fontSize="8" textAnchor="middle" fill="#1a7dc4" stroke="none">123</text>{Bolt}</g>],
  ["Button slicer", <g><path d="M5 2h10v6H1v6h7" fill="#fff" stroke="#777" /><path d="M8.500 2H15v6H8.500z" fill={G} stroke="#777" /><path d="M2 9h5v5H2z" fill={L} stroke={B} />{Funnel}{Bolt}</g>],
  ["Text slicer", <g><path d="M1 2h14v12H1z" fill="#fff" stroke="#666" /><path d="m5.500 12 3-8 2.500 5" stroke="#1a7dc4" />{Funnel}{Bolt}</g>],
  ["List slicer", <g><path d="M1 2h14v12H1z" fill="#fff" stroke="#666" /><path d="M8 5h6M3 11h4" stroke="#777" />{Funnel}{Bolt}</g>],
  ["ArcGIS Maps", <g><path d="M1 8h5l8-7h1.500v9l-6 5.500H1z" fill={L} stroke={B} /><path d="M10 2v5l-4 3v4" stroke="#fff" strokeWidth="1.5" /><path d="M.5 0h4.500v6l-2.200 3L.5 6z" fill="#d9661a" stroke="#c75a12" strokeWidth=".6" /><circle cx="13.500" cy="13.500" r="2.200" fill="#e8762d" stroke="none" /></g>],
  ["Power Apps", <g stroke="#8b3fa8" fill="#fbf3fd"><path d="M6 1.500h4l5.500 6.500L10 14.500H6L.5 8z" /><path d="M4.500 4 11 12M11 4 5 12" /></g>],
  ["Power Automate", <g stroke="#1a7dd4" fill="#e7f2fc"><path d="M1 1.500h9l5.500 6.500-5.500 6.500H1L6 8z" /><path d="m4 5.500 7-.5M5 11l8-6M1 14.500 8 8" /></g>],
  ["More visuals", <g fill={K} stroke="none"><circle cx="4" cy="7" r="1" /><circle cx="8" cy="7" r="1" /><circle cx="12" cy="7" r="1" /></g>],
];

/* ---------- data pane ---------- */

const DataPane = styled.aside`
  display: flex;
  flex-direction: column;
  width: 159px;
  padding-bottom: 13px;
  background: #f4f4f4;
`;
const DataSearch = styled.label`
  display: flex;
  align-items: center;
  gap: 5px;
  height: 22px;
  margin: 5px 3px 7px 4px;
  padding-left: 10px;
  border: 1px solid #c8c6c4;
  border-radius: 3px;
  background: #fff;
`;
const FieldTree = styled.ul`
  flex: 1;
  display: flex;
  flex-direction: column;
`;
const FieldRow = styled.li`
  flex: 1;
  display: grid;
  grid-template-columns: 9px 12px 14px 1fr;
  align-items: center;
  column-gap: 4px;
  padding-left: 26px;
  color: #323130;
  white-space: nowrap;
  svg { justify-self: end; }
`;
const TableRow = styled(FieldRow)`
  grid-template-columns: 9px 12px 1fr;
  padding-left: 12px;
`;
const CheckBox = styled.input`
  appearance: none;
  width: 11px;
  height: 11px;
  margin: 0;
  border: 1px solid #7a7876;
  border-radius: 2px;
  background: #fafafa;
`;

type Field = { name: string; kind?: "sum" | "date" };
const fields: Field[] = [
  { name: "Category" }, { name: "City" }, { name: "Country" }, { name: "Customer ID" }, { name: "Customer Name" },
  { name: "Discount", kind: "sum" }, { name: "Order Date", kind: "date" }, { name: "Order ID" }, { name: "Postal Code" },
  { name: "Product ID" }, { name: "Product Name" }, { name: "Profit", kind: "sum" }, { name: "Quantity", kind: "sum" },
  { name: "Region" }, { name: "Row ID", kind: "sum" }, { name: "Sales", kind: "sum" }, { name: "Segment" },
  { name: "Ship Date", kind: "date" }, { name: "Ship Mode" }, { name: "State" }, { name: "Sub-Category" },
];
const FieldIcon = ({ kind }: { kind?: "sum" | "date" }) =>
  kind === "sum" ? (
    <Icon size={12}><path d="M10.500 3V1.500H2L6.500 6 2 10.500h8.500V9" stroke="#252423" /></Icon>
  ) : kind === "date" ? (
    <Icon size={12}>
      <rect x="1" y="1" width="10" height="10" rx="2" /><path d="M1 3.800h10" />
      <path d="M3.200 6.200h1.200M5.500 6.200h1.200M7.800 6.200H9M3.200 8.500h1.200M5.500 8.500h1.200" strokeWidth="1.2" />
    </Icon>
  ) : (
    <span />
  );

/* ---------- status bar ---------- */

const StatusBar = styled.footer`
  position: relative;
  display: flex;
  align-items: center;
  justify-content: space-between;
  height: 21px;
  padding-right: 16px;
  border-top: 1px solid #cfcecd;
  border-bottom: 1px solid #cfcecd;
  background: #f4f4f4;
  color: #3b3a39;
  &::after { content: ""; position: absolute; left: 0; bottom: -1px; width: 49%; height: 1px; background: #5f6163; }
`;
const PageCount = styled.span`
  margin-left: -2px;
`;
const ZoomTools = styled.div`
  display: flex;
  align-items: center;
  gap: 6px;
`;
const ZoomStep = styled(PlainButton)`
  font-weight: 700;
`;
const ZoomValue = styled.span`
  margin: 0 12px 0 6px;
`;
const ZoomRange = styled.input`
  appearance: none;
  width: 88px;
  height: 12px;
  margin: 0;
  background: linear-gradient(#555, #555) 50% 50% / 1px 6px no-repeat, linear-gradient(#8a8886, #8a8886) 0 50% / 100% 1px no-repeat;
  &::-webkit-slider-thumb { appearance: none; width: 4px; height: 9px; background: #323130; }
`;

/* ---------- task bar ---------- */

const TaskBar = styled.footer`
  display: flex;
  align-items: stretch;
  height: 42px;
  padding-right: 16px;
  background: #eeeeee;
  color: #1b1a19;
`;
const Weather = styled(PlainButton)`
  position: relative;
  justify-content: flex-start;
  width: 100px;
  padding-left: 12px;
`;
const Badge = styled.span`
  position: absolute;
  left: 22px;
  top: 7px;
  width: 14px;
  height: 14px;
  border-radius: 7px;
  background: #c42b1c;
  color: #fff;
  font-size: 9px;
  line-height: 14px;
`;
const TaskItem = styled.button<{ $width: number; $running?: boolean; $active?: boolean }>`
  position: relative;
  display: flex;
  align-items: center;
  gap: 5px;
  width: ${(p) => p.$width}px;
  padding: 2px 0 0;
  border: 0;
  background: none;
  text-align: left;
  ${(p) =>
    p.$active &&
    css`
      margin: 4px 8px 3px 0;
      padding: 1px 0 0 2px;
      border-radius: 3px;
      background: #fafafa;
    `}
  ${(p) =>
    (p.$running || p.$active) &&
    css`
      &::after {
        content: "";
        position: absolute;
        left: 6px;
        bottom: ${p.$active ? 0 : 4}px;
        width: ${p.$active ? 9 : 4}px;
        height: 3px;
        border-radius: 2px;
        background: ${p.$active ? "#6b54c6" : "#8a8886"};
      }
    `}
`;
const TaskLabel = styled.span<{ $width: number }>`
  width: ${(p) => p.$width}px;
  overflow: hidden;
  white-space: nowrap;
`;
const Tray = styled.div`
  display: flex;
  align-items: center;
  margin-left: auto;
`;
const TrayButton = styled(PlainButton)<{ $gap: number }>`
  margin-right: ${(p) => p.$gap}px;
`;
const Language = styled.div`
  margin-right: 16px;
  text-align: center;
`;
const Clock = styled.time`
  text-align: right;
`;

const EdgeArt = ({ id, children }: { id: string; children?: React.ReactNode }) => (
  <g stroke="none">
    <defs>
      <linearGradient id={id} x1="0" y1="1" x2="1" y2="0">
        <stop offset="0" stopColor="#0c59a4" /><stop offset=".5" stopColor="#1ba1dc" /><stop offset="1" stopColor="#5fd068" />
      </linearGradient>
    </defs>
    <circle cx="8" cy="8" r="7.200" fill={`url(#${id})`} />
    <path d="M15 9c-1 2-5 2.500-6 1s1-2 0-4-5-1.500-6.500 1C3 4 8 4 10 6.500S11 11 15 9z" fill="#e7f6fb" />
    {children}
  </g>
);
const taskArt: Record<string, React.ReactNode> = {
  win: <g fill="#1583dc" stroke="none"><path d="M1 1h6.600v6.600H1zM8.400 1H15v6.600H8.400zM1 8.400h6.600V15H1zM8.400 8.400H15V15H8.400z" /></g>,
  search: <g strokeWidth="1.4" stroke="#222"><circle cx="7" cy="7" r="5" /><path d="m10.700 10.700 4 4" /></g>,
  views: <g stroke="none"><path d="M6 2h9v9H6z" fill="#f5f5f5" /><path d="M3 4h5v6h6v4H3z" fill="#2d2d2d" /><path d="M8 5h5v5H8z" fill="#bdbdbd" /></g>,
  edge: <EdgeArt id="edge1"><circle cx="5" cy="11" r="3.500" fill="#111" /></EdgeArt>,
  gpt: (
    <g stroke="#1b1a19" strokeWidth="1.1">
      {[0, 60, 120, 180, 240, 300].map((a) => (
        <path key={a} transform={`rotate(${a} 8 8)`} d="M5.300 9.500V4.300a3 3 0 0 1 5.500-1.600M5.300 6.500 9.800 4" />
      ))}
    </g>
  ),
  folder: <g stroke="none"><path d="M1 3h5l1.500 2H15v9H1z" fill="#f0b429" /><path d="M1 6h14v8H1z" fill="#ffd766" /></g>,
  camera: <g><path d="M1 4h3l1-2h6l1 2h3v10H1z" fill="#777c85" stroke="#5a5e66" /><circle cx="8" cy="9" r="3.800" fill="#b8c8f5" stroke="#fff" /><circle cx="8" cy="9" r="1.800" fill="#5b6bd6" stroke="none" /></g>,
  pin: <g><circle cx="8" cy="8" r="6.500" fill="#c8102e" stroke="none" /><path d="M7 12.500 8.500 6.500M5.800 8.500C4.800 5.500 6.500 4 8.300 4s3.200 1.200 2.800 3.200c-.5 2.500-2.600 2.800-3.300 1.800" stroke="#fff" strokeWidth="1.3" /></g>,
  whatsapp: <g><path d="m1.500 14.500 1-3.500a6.700 6.700 0 1 1 2.700 2.600z" fill="#fff" stroke="#1a8f55" strokeWidth="1.6" /><path d="M6 4.500c-1.500 1.500 0 4 1.500 5.300S11 11.500 11.800 10l-1.800-1-.8.800C8 9.200 7 8.200 6.500 7l.7-.8z" fill="#1a8f55" stroke="none" /><circle cx="14.500" cy="1.500" r="1.500" fill="#7a5fd6" stroke="none" /></g>,
  spotify: <g><circle cx="8" cy="8" r="7" fill="#1db954" stroke="none" /><path d="M4 6c3-1 6-.6 8.500.7M4.300 8.500c2.500-.8 5-.4 7 .7M4.600 10.800c2-.5 4-.3 5.700.6" stroke="#111" strokeWidth="1.3" /></g>,
  linkedin: <g><rect x="2" y="2" width="13" height="13" rx="1.500" fill="#0a66c2" stroke="none" /><path d="M5.200 7v5.500M8 12.500V7M8 9.500c0-3 4-3 4 0v3" stroke="#fff" strokeWidth="1.6" /><circle cx="5.200" cy="4.800" r="1" fill="#fff" stroke="none" /></g>,
  powerbi: <g stroke="none"><path d="M8.500.5h4.500a1 1 0 0 1 1 1v14H8.500z" fill="#d99a1c" /><path d="M5.500 4.500H10a1 1 0 0 1 1 1v10H5.500z" fill="#f0c02d" /><path d="M2.500 8.500H7a1 1 0 0 1 1 1v6H3.500a1 1 0 0 1-1-1z" fill="#f7dc5a" /></g>,
  tiles: <g stroke="none"><path d="M2 2h13v12H2z" fill="#f3f3f3" /><path d="M3 3h6v5H3z" fill="#e08a2c" /><path d="M9.500 3H14v5H9.500z" fill="#c0392b" /><path d="M3 8.500h5V13H3z" fill="#f5c542" /><path d="M8.500 8.500H14V12H8.500z" fill="#2b6cd4" /></g>,
  edge2: <EdgeArt id="edge2"><circle cx="5" cy="11.500" r="3.800" fill="#8a4b3c" /><circle cx="5" cy="10.500" r="1.700" fill="#f0b9a0" /></EdgeArt>,
  snip: <g stroke="none"><path d="M1 14 5 6l3 4 2.500-4L15 14z" fill="#6b4fd8" /><path d="m5 9-4 5h6z" fill="#8f7bf0" /><circle cx="11" cy="3" r="2" fill="#f59e0b" /></g>,
  settings: <g><circle cx="8" cy="8" r="6" stroke="#666c75" strokeWidth="3" strokeDasharray="3 1.700" /><circle cx="8" cy="8" r="4.700" fill="#79808a" stroke="none" /><circle cx="8" cy="8" r="2.800" fill="#1f6fd0" stroke="#dbe9fb" /></g>,
};
type Task = { art: string; name: string; w: number; label?: string; lw?: number; running?: boolean; active?: boolean };
const tasks: Task[] = [
  { art: "win", name: "Start", w: 29 },
  { art: "search", name: "Search", w: 26 },
  { art: "views", name: "Task view", w: 30 },
  { art: "edge", name: "Edge", w: 29 },
  { art: "gpt", name: "ChatGPT", w: 81, label: "Data analy", lw: 50, running: true },
  { art: "folder", name: "Files", w: 86, label: "Screensho", lw: 50, running: true },
  { art: "copilot", name: "Copilot", w: 69, label: "Copilot", lw: 36, running: true },
  { art: "camera", name: "Camera", w: 28 },
  { art: "pin", name: "Pinterest", w: 28 },
  { art: "whatsapp", name: "WhatsApp", w: 72, label: "WhatsA", lw: 40, running: true },
  { art: "spotify", name: "Spotify", w: 78, label: "Spotify P", lw: 46, running: true },
  { art: "linkedin", name: "LinkedIn", w: 27 },
  { art: "powerbi", name: "Power BI", w: 76, label: "INTRO TO", lw: 50, active: true },
  { art: "tiles", name: "Snip", w: 36, running: true },
  { art: "edge2", name: "Browser", w: 86, label: "New story", lw: 50, running: true },
  { art: "snip", name: "Screenshots", w: 86, label: "Screensho", lw: 50, running: true },
  { art: "settings", name: "Settings", w: 60, label: "Setting", lw: 36, running: true },
];

export default function App() {
  return (
    <Shell>
      <GlobalStyle />
      <TitleBar>
        <TitleLeft>
          <PlainButton aria-label="Save">
            <Icon size={16}><path d="M1.500 1.500h13v13h-11l-2-2zM4.500 1.500v5h7v-5M4.500 14.500V9.500h7v5" strokeWidth="1.3" /></Icon>
          </PlainButton>
          <PlainButton aria-label="Undo">
            <Icon size={14}><path d="M2 1v5h5M2.500 5.500C5 2 9 1.500 11 3.500s1.500 4.500 0 6L7 13" strokeWidth="1.3" /></Icon>
          </PlainButton>
          <PlainButton aria-label="Redo">
            <Icon size={14}><path d="M12 1v5H7M11.500 5.500C9 2 5 1.500 3 3.500s-1.500 4.500 0 6L7 13" stroke="#b4b4b4" /></Icon>
          </PlainButton>
          <DocName>INTRO TO POWER BI • Last saved: Yesterday at 3:43 PM</DocName>
          <PlainButton aria-label="File details">
            <Icon w={8} h={14}><path d="M1 6h6L4 9z" strokeWidth=".9" /></Icon>
          </PlainButton>
        </TitleLeft>
        <TitleSearch>
          <Magnifier size={15} flip />
          <SearchInput $size={12} placeholder="Search" aria-label="Search" />
        </TitleSearch>
        <TitleRight>
          <PlainButton>Sign in</PlainButton>
          <Avatar>
            <Icon size={14}><circle cx="7" cy="3.500" r="2.300" /><path d="M2.500 8h9v1.500c0 2-2 3.300-4.500 3.300s-4.500-1.300-4.500-3.300z" /></Icon>
          </Avatar>
          <WindowButton aria-label="Minimize"><Icon size={10}><path d="M.5 5h9" /></Icon></WindowButton>
          <WindowButton aria-label="Maximize"><Icon size={10}><rect x=".8" y=".8" width="8.400" height="8.400" rx="1" /></Icon></WindowButton>
          <WindowButton aria-label="Close"><Icon size={10}><path d="m.8.8 8.400 8.400M9.200.8.8 9.200" /></Icon></WindowButton>
        </TitleRight>
      </TitleBar>

      <MenuBar>
        <MenuItem $lead>File</MenuItem>
        <MenuItem $active>Home</MenuItem>
        {["Insert", "Modeling", "View", "Optimize", "Help"].map((m) => <MenuItem key={m}>{m}</MenuItem>)}
        <ShareButton>
          <Icon size={14}><path d="M3 5.500H1.200V13h9.600v-2M4 10c.5-3.500 2.500-5 5-5V2.500L13 6.500 9 10V7.800c-2.500 0-4 .7-5 2.200z" stroke="#fff" /></Icon>
          Share
          <Icon size={9}><path d="m1 3 3.500 3.500L8 3" stroke="#fff" /></Icon>
        </ShareButton>
      </MenuBar>

      <Ribbon>
        <Group $width={143}>
          <GroupButtons $start>
            <RibbonButton $width={48} $muted>
              <Icon size={28}>{ribbonArt.paste}</Icon>
              <Line>Paste</Line>
            </RibbonButton>
            <ClipList>
              <ClipButton>
                <Icon size={14}><path d="M4 1l4 8.500M9 1 5 9.500" stroke="#8a8a8a" /><circle cx="4" cy="11.500" r="1.700" stroke="#8fc1e6" /><circle cx="9" cy="11.500" r="1.700" stroke="#8fc1e6" /></Icon>Cut
              </ClipButton>
              <ClipButton>
                <Icon size={14}><path d="M5 12H.8V.8H7v2M5.500 3.500h5l3 3v7h-8zM10 3.500V7h3.500M7.500 9.500h4M7.500 11.500h4" stroke="#a9a9a9" /></Icon>Copy
              </ClipButton>
              <ClipButton>
                <Icon size={14}><path d="m1 8 5-3 4 4-3.500 4.500z" stroke="#f2b98a" /><path d="m6 5 1.500-1.500 1.500 1 3-3.500L13 2 10 5.500l.8 1.500L9.500 9z" stroke="#999" /></Icon>Format painter
              </ClipButton>
            </ClipList>
          </GroupButtons>
          <GroupName>Clipboard</GroupName>
        </Group>
        {ribbonGroups.map((g) => (
          <Group key={g.name} $width={g.width}>
            <GroupButtons>
              {g.cmds.map((c) => (
                <RibbonButton key={c.l1 + c.art} $width={c.w} $muted={c.muted}>
                  <Icon size={28}>{ribbonArt[c.art]}</Icon>
                  <span>
                    <Line>{c.l1}</Line>
                    {c.l2 !== undefined && <Line>{c.l2}{c.menu && <ChevronDown />}</Line>}
                  </span>
                </RibbonButton>
              ))}
            </GroupButtons>
            <GroupName>{g.name}</GroupName>
          </Group>
        ))}
        <Collapse aria-label="Collapse ribbon"><Icon size={9}><path d="m1 6 3.500-3.500L8 6" strokeWidth="1.5" /></Icon></Collapse>
      </Ribbon>

      <Workspace>
        <Rail>
          <RailButton aria-label="Report view"><Icon size={14}><path d="M1 0v13h13" /><path d="M3 3h2v8H3zM6.500 6h2v5h-2zM10 2h2.500v9H10z" /></Icon></RailButton>
          <RailButton aria-label="Table view"><Icon size={16}><path d="M1 1.500h14v13H1z" /><path d="M1 3h14" strokeWidth="2" /><path d="M1 7h14M1 11h14M5.700 3v11M10.300 3v11" /></Icon></RailButton>
          <RailButton aria-label="Model view"><Icon size={16}><path d="M.8 5h6v6.500h-6zM.8 7h6M9.500.8h6v5.500h-6zM9.500 2.500h6M9.500 9.500h6v5.500h-6zM9.500 11.500h6M4 5V2.500h5.500M4 11.500V14h5.500" /></Icon></RailButton>
          <RailButton aria-label="DAX query view">
            <Icon w={20} h={16}><path d="M5 8V1h5l4 4v8M10 1v4h4M16 4c1 3 1 8-1.500 10.500" /><text x="0" y="15" fontSize="6" fontWeight="700" fill="#3b3a39" stroke="none">DAX</text></Icon>
          </RailButton>
          <RailButton aria-label="TMDL view">
            <Icon w={20} h={16}><path d="M5 8V1h5l4 4v3M10 1v4h4" /><text x="1" y="15" fontSize="6" fontWeight="700" fill="#3b3a39" stroke="none">TMDL</text></Icon>
          </RailButton>
        </Rail>

        <Center>
          <CenterTop>
            <Canvas>
              <ReportPage>
                <Visual><VisualTitle>Sum of Sales by Region</VisualTitle><PieChart /></Visual>
                <Visual>
                  <VisualTitle>Sum of Sales and Sum of Profit by Region and Segment</VisualTitle>
                  <SegmentLegend>
                    <LegendTitle>Segment</LegendTitle>
                    <LegendItem $color="#118dff">Consumer</LegendItem>
                    <LegendItem $color="#12239e">Corporate</LegendItem>
                    <LegendItem $color="#e66c37">Home Office</LegendItem>
                  </SegmentLegend>
                  <ClusteredChart />
                </Visual>
                <Visual $narrow><VisualTitle $low>Sum of Sales by Region</VisualTitle><ColumnChart /></Visual>
                <Visual><VisualTitle>Sum of Sales by Month and Year</VisualTitle><SmallMultiples /></Visual>
              </ReportPage>
            </Canvas>

            <FiltersPane>
              <FiltersHead>
                <Icon size={11}><path d="M0 1.500h11M2 5.500h7M4 9.500h3" strokeWidth="1.3" /></Icon>
                <h2>Filters</h2>
                <EyeButton aria-label="Show filters"><Icon size={9}><path d="M.5 5C2.500 1.500 6.500 1.500 8.500 5" /><circle cx="4.500" cy="5.500" r="1.500" /></Icon></EyeButton>
                <PlainButton aria-label="Collapse filters"><DoubleChevron /></PlainButton>
              </FiltersHead>
              <FilterSearch>
                <label><Magnifier size={11} /><SearchInput $size={11} $dark placeholder="Search" aria-label="Search filters" /></label>
              </FilterSearch>
              {["Filters on this page", "Filters on all pages"].map((t) => (
                <FilterSection key={t}>
                  <FilterTitle><h3>{t}</h3><PlainButton aria-label={`${t} options`}>...</PlainButton></FilterTitle>
                  <FilterDrop>Add data fields here</FilterDrop>
                </FilterSection>
              ))}
            </FiltersPane>
          </CenterTop>

          <PageTabs>
            <ViewButton $active aria-label="Desktop layout"><Icon size={14}><rect x="1" y="1" width="12" height="9.500" rx="1" /><path d="M5 10.500v2.500M9 10.500v2.500M3.500 13h7" /></Icon></ViewButton>
            <ViewButton aria-label="Mobile layout"><Icon w={10} h={16}><rect x="1" y="1" width="8" height="14" rx="1.500" /><path d="M4 12.500h2" /></Icon></ViewButton>
            <StepButton aria-label="Previous page"><Icon size={8}><path d="M5.500 1v6L2 4z" stroke="#777" strokeWidth=".9" /></Icon></StepButton>
            <StepButton aria-label="Next page"><Icon size={8}><path d="M2.500 1v6L6 4z" stroke="#777" strokeWidth=".9" /></Icon></StepButton>
            <PageTab>Page 1</PageTab>
            <AddPage aria-label="New page"><Icon size={10}><path d="M5 0v10M0 5h10" stroke="#fff" strokeWidth="2" /></Icon></AddPage>
          </PageTabs>
        </Center>

        <VizPane>
          <PaneHead><h2>Visualizations</h2><PlainButton aria-label="Collapse visualizations"><DoubleChevron /></PlainButton></PaneHead>
          <BuildLabel>Build visual</BuildLabel>
          <ModeRow>
            <ModeButton $active aria-label="Build visual">
              <Icon w={22} h={24}><path d="M0 1.500h17" stroke="#888" /><path d="M1 6h20v6H1zM1 15.500h20v6H1z" fill={green} stroke="#0a5a4b" strokeDasharray="2 1" /></Icon>
            </ModeButton>
            <ModeButton aria-label="Format visual">
              <Icon w={22} h={24}><path d="M10 22H1V1.500h9.500L16 7v2M10.500 1.500V7H16" /><path d="M21.500 8.500 14 17M21.500 8.500l-6 9c0 3-3 4.500-6 4 2-1 1.500-4 4.500-4.500z" fill="#f4f4f4" /></Icon>
            </ModeButton>
          </ModeRow>
          <VizGrid>
            {vizArt.map(([name, art]) => (
              <VizButton key={name} aria-label={name} $word={typeof art === "string"}>
                {typeof art === "string" ? art : <Icon size={16}>{art}</Icon>}
              </VizButton>
            ))}
          </VizGrid>
          <FieldWell>
            <WellTitle>Values</WellTitle>
            <WellDrop>Add data fields here</WellDrop>
          </FieldWell>
          <FieldWell>
            <WellTitle $strong>Tooltip</WellTitle>
            <ToggleRow>
              Keep all filters
              <Toggle>On<input type="checkbox" role="switch" defaultChecked /></Toggle>
            </ToggleRow>
            <WellDrop $white>Drag tooltip fields here</WellDrop>
          </FieldWell>
        </VizPane>

        <DataPane>
          <PaneHead><h2>Data</h2><PlainButton aria-label="Collapse data"><DoubleChevron /></PlainButton></PaneHead>
          <DataSearch><Magnifier size={13} /><SearchInput $size={12} placeholder="Search" aria-label="Search data" /></DataSearch>
          <FieldTree>
            <TableRow>
              <PlainButton aria-label="Collapse Orders"><Icon size={8}><path d="m1 2.500 3 3 3-3" /></Icon></PlainButton>
              <Icon size={12}><rect x="1" y="1" width="10" height="10" rx="2" /><path d="M1 4.200h10M1 7.600h10M4.200 1v10M7.600 4v7" /></Icon>
              <span>Orders</span>
            </TableRow>
            {fields.map((f) => (
              <FieldRow key={f.name}>
                {f.kind === "date" ? <PlainButton aria-label={`Expand ${f.name}`}><Icon size={8}><path d="m2.500 1 3 3-3 3" /></Icon></PlainButton> : <span />}
                <CheckBox type="checkbox" id={`field-${f.name}`} />
                <FieldIcon kind={f.kind} />
                <label htmlFor={`field-${f.name}`}>{f.name}</label>
              </FieldRow>
            ))}
          </FieldTree>
        </DataPane>
      </Workspace>

      <StatusBar>
        <PageCount>Page 1 of 1</PageCount>
        <ZoomTools>
          <ZoomStep aria-label="Zoom out">-</ZoomStep>
          <ZoomRange type="range" min="0" max="100" defaultValue="34" aria-label="Zoom" />
          <ZoomStep aria-label="Zoom in">+</ZoomStep>
          <ZoomValue>73%</ZoomValue>
          <PlainButton aria-label="Fit to page"><Icon w={13} h={10}><rect x=".7" y=".7" width="11.600" height="8.600" rx="1.500" /><path d="M3 4V3h1.500M8.500 3H10v1M10 6v1H8.500M4.500 7H3V6" /></Icon></PlainButton>
        </ZoomTools>
      </StatusBar>

      <TaskBar>
        <Weather aria-label="Weather">
          <Icon size={22}>
            <path d="M3 13a8.500 8.500 0 0 0 17-1c-4 3-9 2-10-2z" fill="#f5a01a" stroke="none" />
            <path d="M2 10a3 3 0 0 1 1-5 4 4 0 0 1 7 0 2.800 2.800 0 0 1 1 5z" fill="#a9c6ee" stroke="none" />
          </Icon>
          <Badge>1</Badge>
        </Weather>
        {tasks.map((t) => (
          <TaskItem key={t.name} aria-label={t.name} $width={t.w} $running={t.running} $active={t.active}>
            {t.art === "copilot" ? <Icon size={16} box="0 0 28 28"><CopilotMark id="task" /></Icon> : <Icon size={16}>{taskArt[t.art]}</Icon>}
            {t.label && <TaskLabel $width={t.lw ?? 50}>{t.label}</TaskLabel>}
          </TaskItem>
        ))}
        <Tray>
          <TrayButton $gap={15} aria-label="Hidden icons"><Icon size={10}><path d="m.8 7 4.200-4L9.200 7" strokeWidth="1.3" /></Icon></TrayButton>
          <TrayButton $gap={14} aria-label="Keyboard"><Icon w={15} h={11}><rect x=".7" y=".7" width="13.600" height="9.600" rx="1" /><path d="M3 3.500h9.500M3 5.500h9.500" strokeDasharray="1.200 1" /><path d="M4.500 8h6" /></Icon></TrayButton>
          <TrayButton $gap={17} aria-label="Touchpad"><Icon w={14} h={12}><rect x=".7" y=".7" width="12.600" height="10.600" rx="1.500" /><path d="M.7 7h12.600M7 7v4" /></Icon></TrayButton>
          <Language>ENG<br />US</Language>
          <TrayButton $gap={7} aria-label="Network"><Icon size={14}><path d="M.8 5.500a8.800 8.800 0 0 1 12.400 0M2.800 7.800a6 6 0 0 1 8.400 0M4.800 10a3.200 3.200 0 0 1 4.400 0" strokeWidth="1.2" /><circle cx="7" cy="11.500" r="1" fill={K} /></Icon></TrayButton>
          <TrayButton $gap={7} aria-label="Volume"><Icon w={14} h={12}><path d="M.8 4h2.500L6.500 1v10L3.300 8H.8zM8.500 4c1 1.200 1 2.800 0 4M10.500 2.300c2 2 2 5.400 0 7.400" /></Icon></TrayButton>
          <TrayButton $gap={16} aria-label="Battery"><Icon w={16} h={14}><path d="M8 2.500h5.500v8H4" /><path d="M15 5v3" strokeWidth="1.5" /><path d="M5 1v3M2 4h5v3L5 9v3H3.500V9L1.500 7z" fill="#222" strokeWidth=".8" /></Icon></TrayButton>
          <Clock>8:33 PM<br />9/25/2025</Clock>
        </Tray>
      </TaskBar>
    </Shell>
  );
}
